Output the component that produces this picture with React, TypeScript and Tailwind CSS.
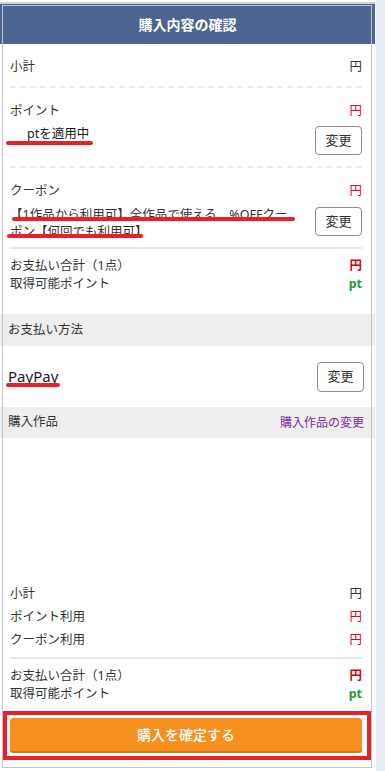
import React from "react";

function Btn({ h = "h-[29px]" }: { h?: string }) {
  return (
    <button
      className={`${h} w-[47px] shrink-0 rounded-[4px] border border-[#8c8c8c] bg-white text-[13px] leading-none text-[#333] flex items-center justify-center`}
    >
      変更
    </button>
  );
}

function Mark({ cls }: { cls: string }) {
  return <div className={`pointer-events-none absolute h-[4px] rounded-full bg-[#e8202a] ${cls}`} />;
}

export default function App() {
  return (
    <div className="flex min-h-[771px] bg-white font-['Noto_Sans','Noto_Sans_CJK_JP',sans-serif] text-[12.5px] text-[#333]">
      <div className="relative w-[375px] shrink-0">
        <div className="h-[2px]" />
        <div className="h-[2px] bg-[#d3d3d3]" />
        <header className="h-[40px] bg-[#4c6491] flex items-center justify-center text-white font-bold text-[14px]">
          購入内容の確認
        </header>

        {/* 小計 */}
        <div className="ml-[10px] mr-[13px] pt-[15px] pb-[11px] border-b-2 border-dashed border-[#ebebeb] flex justify-between leading-[16px]">
          <span>小計</span>
          <span>円</span>
        </div>

        {/* ポイント */}
        <div className="relative ml-[10px] mr-[13px] pt-[15px] pb-[11px] border-b-2 border-dashed border-[#ebebeb]">
          <div className="flex justify-between leading-[16px]">
            <span>ポイント</span>
            <span className="text-[#e4002b]">円</span>
          </div>
          <div className="mt-[7px] flex justify-between items-start">
            <span className="pl-[17px] leading-[16px] text-[#1a1a1a]">ptを適用中</span>
            <Btn />
          </div>
          <Mark cls="left-[-4px] top-[53px] w-[87px]" />
        </div>

        {/* クーポン */}
        <div className="relative ml-[10px] mr-[13px] pt-[15px] pb-[7px] border-b-2 border-[#e8e8e8]">
          <div className="flex justify-between leading-[16px]">
            <span>クーポン</span>
            <span className="text-[#e4002b]">円</span>
          </div>
          <div className="mt-[7px] flex justify-between items-start">
            <span className="leading-[17px] text-[#333]">
              【1作品から利用可】全作品で使える　%OFFクー
              <br />
              ポン【何回でも利用可】
            </span>
            <div className="mt-[1px]">
              <Btn />
            </div>
          </div>
          <Mark cls="left-[2px] top-[49px] w-[283px]" />
          <Mark cls="left-[-3px] top-[66px] w-[136px]" />
        </div>

        {/* 合計 */}
        <div className="ml-[10px] mr-[13px] pt-[8px] pb-[21px] leading-[18px]">
          <div className="flex justify-between">
            <span>お支払い合計（1点）</span>
            <span className="font-bold text-[#d0021b]">円</span>
          </div>
          <div className="flex justify-between">
            <span>取得可能ポイント</span>
            <span className="font-bold text-[#1f9a3c]">pt</span>
          </div>
        </div>

        <div className="h-[32px] bg-[#eeeeee] flex items-center pl-[8px]">お支払い方法</div>

        <div className="relative h-[61px] flex items-center justify-between pl-[8px] pr-[11px]">
          <span className="text-[15px] text-[#222]">PayPay</span>
          <Btn h="h-[30px]" />
          <Mark cls="left-[6px] top-[37px] w-[54px]" />
        </div>

        <div className="h-[31px] bg-[#eeeeee] flex items-center justify-between pl-[8px] pr-[11px]">
          <span>購入作品</span>
          <span className="text-[12px] text-[#7a2ca0]">購入作品の変更</span>
        </div>

        <div className="h-[145px]" />

        <div className="ml-[10px] mr-[13px]">
          <div className="h-[23px] flex items-center justify-between">
            <span>小計</span>
            <span>円</span>
          </div>
          <div className="h-[23px] flex items-center justify-between">
            <span>ポイント利用</span>
            <span className="text-[#e4002b]">円</span>
          </div>
          <div className="h-[23px] flex items-center justify-between">
            <span>クーポン利用</span>
            <span className="text-[#e4002b]">円</span>
          </div>
          <div className="mt-[5px] h-[2px] bg-[#e8e8e8]" />
          <div className="pt-[8px] leading-[18px]">
            <div className="flex justify-between">
              <span>お支払い合計（1点）</span>
              <span className="font-bold text-[#d0021b]">円</span>
            </div>
            <div className="flex justify-between">
              <span>取得可能ポイント</span>
              <span className="font-bold text-[#1f9a3c]">pt</span>
            </div>
          </div>
        </div>

        <div className="mt-[8px] ml-[3px] mr-[4px] border-4 border-[#e8202a] pl-[3px] pr-[5px] py-[3px]">
          <button className="h-[35px] w-full rounded-[3px] bg-[#f7901e] border-b-2 border-[#cf7718] text-white text-[14px] font-medium flex items-center justify-center">
            購入を確定する
          </button>
        </div>

        <div className="pointer-events-none absolute left-[2px] top-[5px] w-[370px] h-[763px] border border-[#c4c4c4]" />
      </div>
      <div className="ml-[1px] flex-1 bg-[#e8ecf5]" />
    </div>
  );
}
